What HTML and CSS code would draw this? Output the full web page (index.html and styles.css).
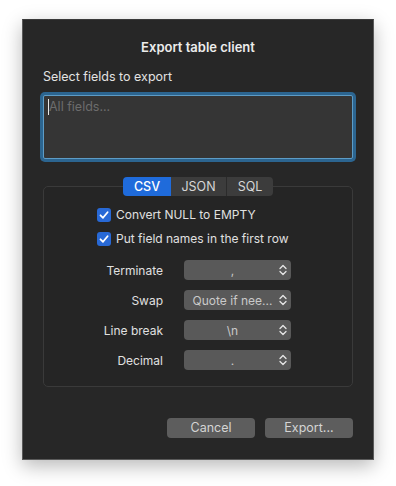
FILE: index.html
```html
<!DOCTYPE html>
<html>
<head>
<meta charset="utf-8">
<link rel="stylesheet" href="styles.css">
</head>
<body>
<div class="dialog">
  <div class="title">Export table client</div>
  <div class="label">Select fields to export</div>
  <div class="fields"><span class="caret"></span><span class="placeholder">All fields...</span></div>
  <div class="seg">
    <span class="seg-item sel s1">CSV</span><span class="seg-item s2">JSON</span><span class="seg-item s3">SQL</span>
  </div>
  <div class="group">
    <div class="checks">
      <div class="check"><span class="box"><svg viewBox="0 0 14 14" width="14" height="14"><path d="M3.5 7.3 L6 9.8 L10.6 4.2" fill="none" stroke="#fff" stroke-width="1.8" stroke-linecap="round" stroke-linejoin="round"/></svg></span>Convert NULL to EMPTY</div>
      <div class="check"><span class="box"><svg viewBox="0 0 14 14" width="14" height="14"><path d="M3.5 7.3 L6 9.8 L10.6 4.2" fill="none" stroke="#fff" stroke-width="1.8" stroke-linecap="round" stroke-linejoin="round"/></svg></span>Put field names in the first row</div>
    </div>
    <div class="form">
      <div class="row"><span class="rlabel">Terminate</span><span class="popup"><span class="pval">,</span><svg class="chev" viewBox="0 0 8 12" width="8" height="12"><path d="M1 4.5 L4 1.5 L7 4.5 M1 7.5 L4 10.5 L7 7.5" fill="none" stroke="#e6e6e6" stroke-width="1.3" stroke-linecap="round" stroke-linejoin="round"/></svg></span></div>
      <div class="row"><span class="rlabel">Swap</span><span class="popup"><span class="pval">Quote if nee...</span><svg class="chev" viewBox="0 0 8 12" width="8" height="12"><path d="M1 4.5 L4 1.5 L7 4.5 M1 7.5 L4 10.5 L7 7.5" fill="none" stroke="#e6e6e6" stroke-width="1.3" stroke-linecap="round" stroke-linejoin="round"/></svg></span></div>
      <div class="row"><span class="rlabel">Line break</span><span class="popup"><span class="pval">\n</span><svg class="chev" viewBox="0 0 8 12" width="8" height="12"><path d="M1 4.5 L4 1.5 L7 4.5 M1 7.5 L4 10.5 L7 7.5" fill="none" stroke="#e6e6e6" stroke-width="1.3" stroke-linecap="round" stroke-linejoin="round"/></svg></span></div>
      <div class="row"><span class="rlabel">Decimal</span><span class="popup"><span class="pval">.</span><svg class="chev" viewBox="0 0 8 12" width="8" height="12"><path d="M1 4.5 L4 1.5 L7 4.5 M1 7.5 L4 10.5 L7 7.5" fill="none" stroke="#e6e6e6" stroke-width="1.3" stroke-linecap="round" stroke-linejoin="round"/></svg></span></div>
    </div>
  </div>
  <div class="buttons">
    <span class="btn">Cancel</span><span class="btn">Export...</span>
  </div>
</div>
</body>
</html>
```
FILE: styles.css
```css
* { box-sizing: border-box; }
html, body { margin: 0; padding: 0; background: #fff; }
body {
  font-family: Inter, "Liberation Sans", sans-serif;
  font-size: 12px;
  color: #dedede;
  width: 396px;
  height: 486px;
  overflow: hidden;
}
.dialog {
  margin: 19px 0 0 22px;
  width: 352px;
  height: 441px;
  background: #272727;
  border: 1px solid #5a5a5a;
  border-top-color: #3a3a3a;
  box-shadow: 0 6px 18px rgba(0,0,0,0.28);
  padding: 19px 20px 0 20px;
}
.title {
  text-align: center;
  font-weight: 600;
  font-size: 13px;
  line-height: 16px;
  color: #ececec;
}
.label {
  margin-top: 14px;
  line-height: 16px;
  font-size: 12.5px;
  color: #e2e2e2;
}
.fields {
  margin-top: 10px;
  height: 64px;
  background: #353535;
  border: 1px solid #5d9cc6;
  border-radius: 2px;
  box-shadow: 0 0 0 3px #2c6590;
  padding: 3px 4px;
  display: flex;
  align-items: flex-start;
  line-height: 16px;
}
.caret {
  width: 1px;
  height: 16px;
  background: #e8e8e8;
}
.placeholder { color: #6c6c6c; font-size: 12.5px; }
.seg {
  margin-top: 18px;
  display: flex;
  justify-content: center;
  position: relative;
  z-index: 1;
}
.seg-item {
  height: 19px;
  line-height: 19px;
  text-align: center;
  background: #3c3c3c;
  color: #d6d6d6;
  font-size: 12.5px;
}
.seg-item.sel { background: #1f6bdb; color: #fff; font-weight: 500; }
.s1 { width: 48px; border-radius: 4px 0 0 4px; }
.s2 { width: 56px; border-right: 1px solid #2b2b2b; }
.s3 { width: 46px; border-radius: 0 4px 4px 0; }
.group {
  margin-top: -10px;
  height: 201px;
  border: 1px solid #3a3a3a;
  border-radius: 5px;
  background: #252525;
  padding-top: 21px;
}
.checks {
  padding-left: 53px;
  display: flex;
  flex-direction: column;
  gap: 10px;
}
.check {
  display: flex;
  align-items: center;
  gap: 5px;
  line-height: 14px;
  color: #e0e0e0;
}
.box {
  width: 14px;
  height: 14px;
  border-radius: 3px;
  background: #2869d6;
  display: flex;
}
.form {
  margin-top: 14px;
  display: flex;
  flex-direction: column;
  gap: 10px;
}
.row {
  display: flex;
  align-items: center;
  height: 20px;
}
.rlabel {
  width: 119px;
  text-align: right;
  color: #e0e0e0;
}
.popup {
  margin-left: 21px;
  width: 107px;
  height: 20px;
  background: #595959;
  border-radius: 4px;
  display: flex;
  align-items: center;
  padding: 0 4px 0 4px;
}
.pval {
  flex: 1;
  text-align: center;
  color: #c9c9c9;
  white-space: nowrap;
  overflow: hidden;
}
.chev { flex: none; margin-left: 2px; }
.buttons {
  margin-top: 31px;
  display: flex;
  justify-content: flex-end;
  gap: 10px;
}
.btn {
  width: 88px;
  height: 20px;
  line-height: 20px;
  text-align: center;
  background: #5d5d5d;
  border-radius: 4px;
  color: #d4d4d4;
  font-size: 12.5px;
}
```
